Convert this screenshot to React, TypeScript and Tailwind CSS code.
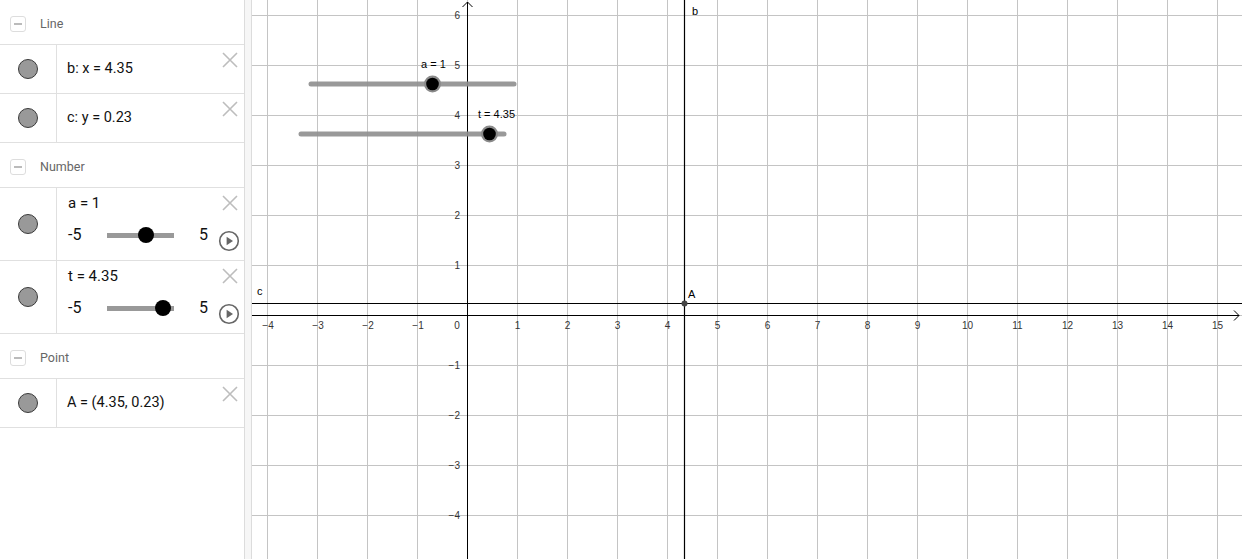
import React from 'react'

// algebra view data
interface Item {
    label: string
    slider?: { min: number; max: number; value: number }
}

interface Group {
    title: string
    items: Item[]
}

const groups: Group[] = [
    {
        title: 'Line',
        items: [{ label: 'b: x = 4.35' }, { label: 'c: y = 0.23' }],
    },
    {
        title: 'Number',
        items: [
            { label: 'a = 1', slider: { min: -5, max: 5, value: 1 } },
            { label: 't = 4.35', slider: { min: -5, max: 5, value: 4.35 } },
        ],
    },
    {
        title: 'Point',
        items: [{ label: 'A = (4.35, 0.23)' }],
    },
]

const CloseIcon = () => (
    <svg width="16" height="16" viewBox="0 0 16 16" className="absolute right-[6px] top-[7px]">
        <path d="M1 1 L15 15 M15 1 L1 15" stroke="#bdbdbd" strokeWidth="1.6" fill="none" />
    </svg>
)

const PlayIcon = () => (
    <svg width="22" height="22" viewBox="0 0 22 22" className="absolute right-[4px] top-[42px]">
        <circle cx="11" cy="11" r="9.3" stroke="#666" strokeWidth="1.6" fill="none" />
        <path d="M8.6 6.8 L15 11 L8.6 15.2 Z" fill="#666" />
    </svg>
)

const Dot = () => (
    <div className="w-[20px] h-[20px] rounded-full bg-[#999999] border border-[#3a3a3a]" />
)

const PanelSlider = ({ min, max, value }: { min: number; max: number; value: number }) => {
    const pct = (value - min) / (max - min)
    return (
        <div className="relative w-[67px] h-[16px] flex items-center">
            <div className="w-full h-[5px] bg-[#999999]" />
            <div
                className="absolute top-[0px] w-[16px] h-[16px] rounded-full bg-black"
                style={{ left: `${pct * (67 - 16)}px` }}
            />
        </div>
    )
}

const AlgebraRow = ({ item, last }: { item: Item; last: boolean }) => {
    const h = item.slider ? (last ? 'h-[74px]' : 'h-[73px]') : last ? 'h-[50px]' : 'h-[49px]'
    return (
        <div className={`flex border-t border-[#e0e0e0] ${last ? 'border-b' : ''} ${h}`}>
            <div className="w-[57px] shrink-0 border-r border-[#e0e0e0] flex items-center justify-center pr-[1px]">
                <Dot />
            </div>
            <div className="relative flex-1">
                {item.slider ? (
                    <div className="flex flex-col pl-[11px] pt-[5px]">
                        <div className="text-[15px] leading-[20px] text-[#111]">{item.label}</div>
                        <div className="flex items-center mt-[12px] h-[20px]">
                            <span className="w-[39px] text-[16px] text-[#111]">{item.slider.min}</span>
                            <PanelSlider {...item.slider} />
                            <span className="ml-[25px] text-[16px] text-[#111]">{item.slider.max}</span>
                        </div>
                        <PlayIcon />
                    </div>
                ) : (
                    <div className="h-full flex items-center pl-[10px] pb-[1px] text-[14.5px] text-[#111]">
                        {item.label}
                    </div>
                )}
                <CloseIcon />
            </div>
        </div>
    )
}

const AlgebraView = () => (
    <div className="w-[245px] shrink-0 h-full border-r border-[#dcdcdc] bg-white" style={{ fontFamily: 'Roboto, "Noto Sans", sans-serif' }}>
        {groups.map((g) => (
            <div key={g.title}>
                <div className="h-[44px] flex items-center pl-[10px] pt-[4px]">
                    <div className="w-[16px] h-[16px] rounded-[3px] border border-[#dddddd] flex items-center justify-center">
                        <div className="w-[8px] h-[1.5px] bg-[#bbbbbb]" />
                    </div>
                    <span className="ml-[14px] text-[12.5px] text-[#666666]">{g.title}</span>
                </div>
                {g.items.map((it, i) => (
                    <AlgebraRow key={it.label} item={it} last={i === g.items.length - 1} />
                ))}
            </div>
        ))}
    </div>
)

// graphics view, drawn in page coordinates (viewBox starts at x=252)
const OX = 467
const OY = 315
const U = 50

const GraphSlider = ({ x1, x2, y, knob, label, lx, ly }: { x1: number; x2: number; y: number; knob: number; label: string; lx: number; ly: number }) => (
    <g>
        <line x1={x1} y1={y} x2={x2} y2={y} stroke="#8f8f8f" strokeWidth="5" strokeLinecap="round" opacity="0.9" />
        <circle cx={knob} cy={y} r="8.5" fill="#8a8a8a" />
        <circle cx={knob} cy={y} r="6.3" fill="#000" />
        <text x={lx} y={ly} fontSize="11" fill="#000">{label}</text>
    </g>
)

const GraphicsView = () => {
    const xs: number[] = []
    for (let k = -4; k <= 15; k++) xs.push(k)
    const ys: number[] = []
    for (let k = -5; k <= 6; k++) ys.push(k)

    return (
        <svg
            className="flex-1 h-full block"
            viewBox="252 0 990 559"
            style={{ fontFamily: '"Liberation Sans", Arial, sans-serif' }}
        >
            <rect x="252" y="0" width="990" height="559" fill="#fff" />
            {xs.map((k) => (
                <line key={'gx' + k} x1={OX + k * U + 0.5} y1={0} x2={OX + k * U + 0.5} y2={559} stroke="#c4c4c4" strokeWidth="1" />
            ))}
            {ys.map((k) => (
                <line key={'gy' + k} x1={252} y1={OY - k * U + 0.5} x2={1242} y2={OY - k * U + 0.5} stroke="#c4c4c4" strokeWidth="1" />
            ))}

            {/* axes */}
            <line x1={252} y1={OY + 0.5} x2={1239} y2={OY + 0.5} stroke="#000" strokeWidth="1" />
            <path d={`M1234 ${OY - 4.5} L1239 ${OY + 0.5} L1234 ${OY + 5.5}`} stroke="#000" fill="none" strokeWidth="1" />
            <line x1={OX + 0.5} y1={2} x2={OX + 0.5} y2={559} stroke="#000" strokeWidth="1" />
            <path d={`M${OX - 4.5} 7 L${OX + 0.5} 2 L${OX + 5.5} 7`} stroke="#000" fill="none" strokeWidth="1" />

            {/* x tick labels */}
            {xs.map((k) =>
                k === 0 ? null : (
                    <text key={'lx' + k} x={OX + k * U + (k < 0 ? 1 : 0.5)} y={329} fontSize="10" fill="#333" textAnchor="middle">
                        {k < 0 ? '\u2212' + -k : k}
                    </text>
                )
            )}
            <text x={457} y={329} fontSize="10" fill="#333" textAnchor="middle">0</text>
            {/* y tick labels */}
            {ys.map((k) =>
                k === 0 || k < -4 ? null : (
                    <text key={'ly' + k} x={460} y={OY - k * U + 4} fontSize="10" fill="#333" textAnchor="end">
                        {k < 0 ? '\u2212' + -k : k}
                    </text>
                )
            )}

            {/* line b: x = 4.35, line c: y = 0.23 */}
            <line x1={684.5} y1={0} x2={684.5} y2={559} stroke="#000" strokeWidth="1.2" />
            <line x1={252} y1={303.5} x2={1242} y2={303.5} stroke="#000" strokeWidth="1.2" />
            <text x={692} y={15} fontSize="11" fill="#000">b</text>
            <text x={257} y={295} fontSize="11" fill="#000">c</text>

            {/* point A */}
            <circle cx={684.5} cy={303.5} r="3" fill="#444" />
            <text x={688} y={298} fontSize="11" fill="#000">A</text>

            <GraphSlider x1={311} x2={514} y={84} knob={432.5} label="a = 1" lx={421} ly={68} />
            <GraphSlider x1={301} x2={504} y={134} knob={489.5} label="t = 4.35" lx={478} ly={118} />
        </svg>
    )
}

export default function App() {
    return (
        <div className="w-[1242px] h-[559px] flex overflow-hidden bg-white">
            <AlgebraView />
            <div className="w-[7px] shrink-0 h-full bg-[#f6f6f6] border-r border-[#dcdcdc]" />
            <GraphicsView />
        </div>
    )
}
